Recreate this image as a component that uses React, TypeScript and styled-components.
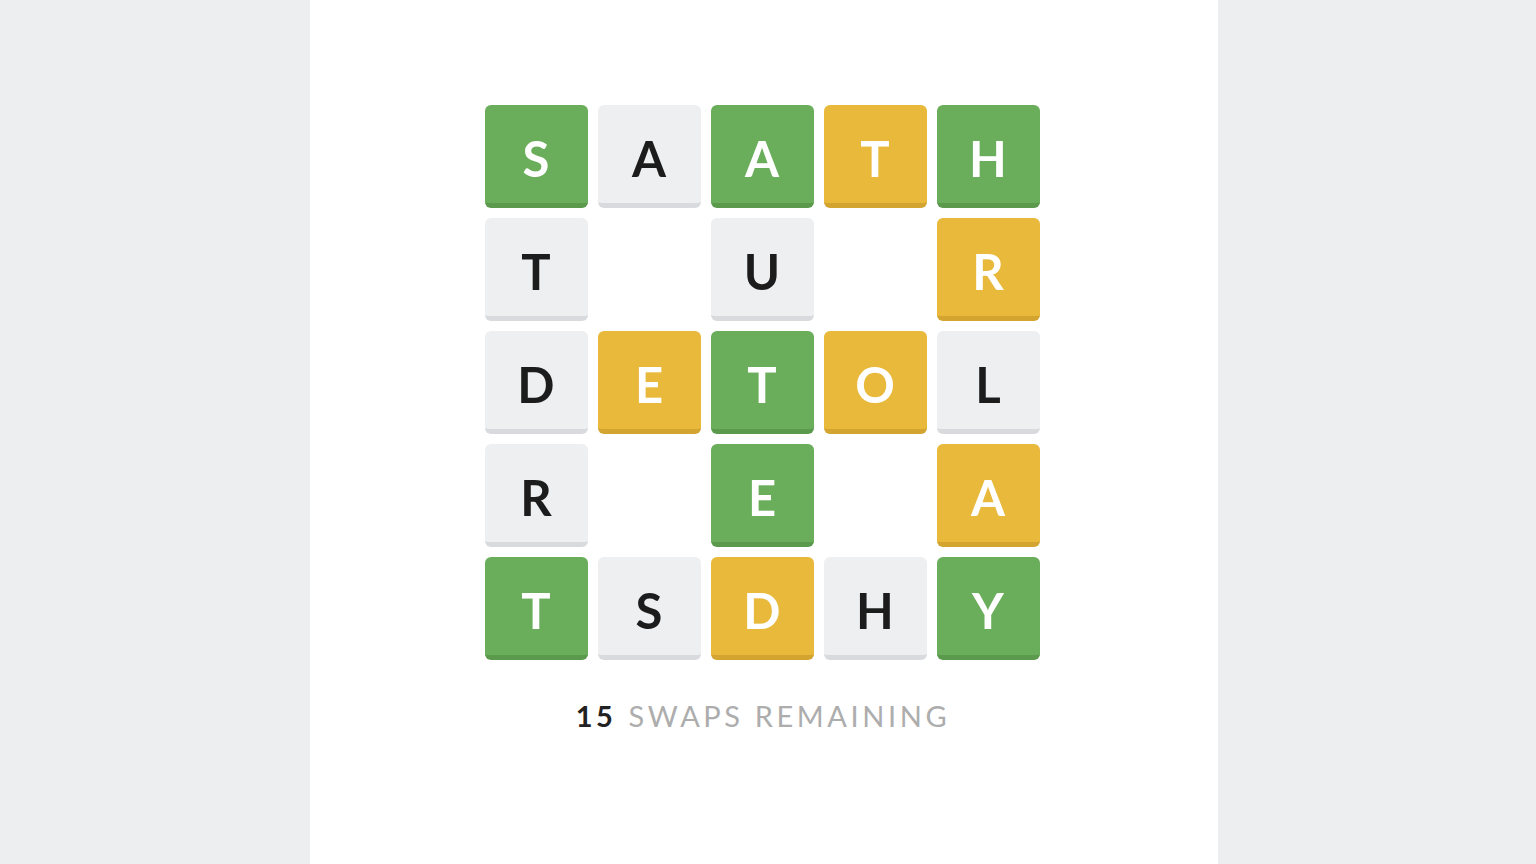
import styled, { createGlobalStyle } from 'styled-components';

type Tone = 'green' | 'yellow' | 'gray' | 'empty';

const GlobalStyle = createGlobalStyle`
  html, body {
    margin: 0;
    padding: 0;
    background: #eceef0;
    font-family: Lato, "Open Sans", sans-serif;
  }
`;

const Page = styled.div`
  min-height: 864px;
  display: flex;
  padding-left: 310px;
`;

const Panel = styled.main`
  width: 908px;
  min-height: 864px;
  background: #ffffff;
  display: flex;
  flex-direction: column;
  align-items: center;
  padding-top: 105px;
  box-sizing: border-box;
`;

const Board = styled.div`
  display: grid;
  grid-template-columns: repeat(5, 103px);
  grid-auto-rows: 103px;
  gap: 10px;
  margin-left: -4px;
`;

const faces: Record<Tone, { bg: string; edge: string; ink: string }> = {
  green: { bg: '#6aae5b', edge: '#5b9a4d', ink: '#ffffff' },
  yellow: { bg: '#e8b93b', edge: '#d3a42f', ink: '#ffffff' },
  gray: { bg: '#edeff1', edge: '#d8dadd', ink: '#1c1c1c' },
  empty: { bg: 'transparent', edge: 'transparent', ink: 'transparent' },
};

const Tile = styled.div<{ $tone: Tone }>`
  box-sizing: border-box;
  border-radius: 6px;
  background: ${p => faces[p.$tone].bg};
  border-bottom: 5px solid ${p => faces[p.$tone].edge};
  color: ${p => faces[p.$tone].ink};
  display: flex;
  align-items: center;
  justify-content: center;
  padding-top: 8px;
  font-size: 49px;
  font-weight: 700;
  line-height: 1;
  letter-spacing: 0;
`;

const Counter = styled.p`
  margin: 38px 0 0;
  margin-left: -2px;
  font-size: 29px;
  letter-spacing: 3.6px;
  color: #adadad;
  font-weight: 400;
`;

const Count = styled.b`
  color: #222222;
  font-weight: 700;
  margin-right: 12px;
`;

const rows: [string, Tone][][] = [
  [['S', 'green'], ['A', 'gray'], ['A', 'green'], ['T', 'yellow'], ['H', 'green']],
  [['T', 'gray'], ['', 'empty'], ['U', 'gray'], ['', 'empty'], ['R', 'yellow']],
  [['D', 'gray'], ['E', 'yellow'], ['T', 'green'], ['O', 'yellow'], ['L', 'gray']],
  [['R', 'gray'], ['', 'empty'], ['E', 'green'], ['', 'empty'], ['A', 'yellow']],
  [['T', 'green'], ['S', 'gray'], ['D', 'yellow'], ['H', 'gray'], ['Y', 'green']],
];

export default function App() {
  return (
    <>
      <GlobalStyle />
      <Page>
        <Panel>
          <Board>
            {rows.flat().map(([letter, tone], i) => (
              <Tile key={i} $tone={tone}>{letter}</Tile>
            ))}
          </Board>
          <Counter>
            <Count>15</Count>SWAPS REMAINING
          </Counter>
        </Panel>
      </Page>
    </>
  );
}
